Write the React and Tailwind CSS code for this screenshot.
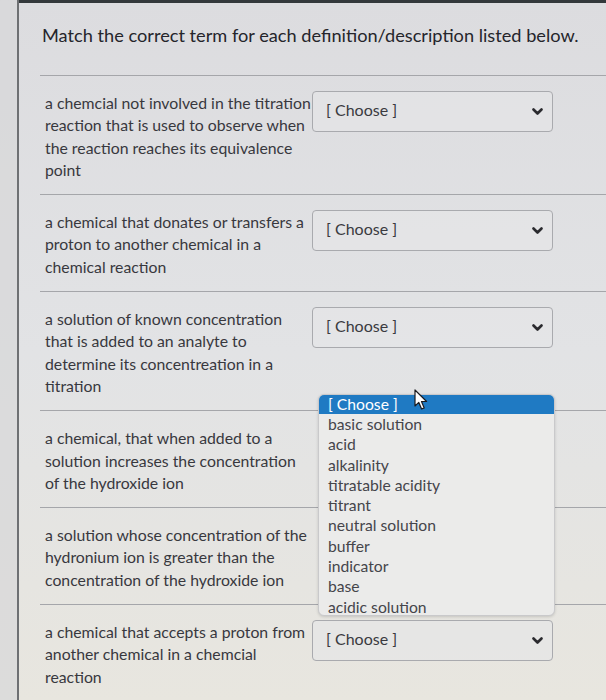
import React from "react";

const rows = [
  ["a chemcial not involved in the titration", "reaction that is used to observe when", "the reaction reaches its equivalence", "point"],
  ["a chemical that donates or transfers a", "proton to another chemical in a", "chemical reaction"],
  ["a solution of known concentration", "that is added to an analyte to", "determine its concentreation in a", "titration"],
  ["a chemical, that when added to a", "solution increases the concentration", "of the hydroxide ion"],
  ["a solution whose concentration of the", "hydronium ion is greater than the", "concentration of the hydroxide ion"],
  ["a chemical that accepts a proton from", "another chemical in a chemcial", "reaction"],
];

const options = [
  "basic solution",
  "acid",
  "alkalinity",
  "titratable acidity",
  "titrant",
  "neutral solution",
  "buffer",
  "indicator",
  "base",
  "acidic solution",
];

function Chevron() {
  return (
    <svg width="11" height="8" viewBox="0 0 11 8" className="shrink-0">
      <path d="M1.5 1.5 L5.5 5.5 L9.5 1.5" fill="none" stroke="#2a2a2e" strokeWidth="2.6" strokeLinecap="round" strokeLinejoin="round" />
    </svg>
  );
}

function Select({ hidden }) {
  return (
    <div className={"w-[241px] h-[41px] shrink-0 rounded-[4px] border border-[#a9aaae] bg-[#e6e6e8]/60 flex items-center justify-between pl-[13px] pr-[9px] " + (hidden ? "invisible" : "visible")}>
      <span className="text-[16px] text-[#3a3a40] -mt-[3px]">[ Choose ]</span>
      <Chevron />
    </div>
  );
}

export default function App() {
  return (
    <div className="relative w-[606px] h-[700px] overflow-hidden bg-gradient-to-b from-[#dcdcdf] via-[#e2e3e5] to-[#e8e6df] font-['Lato',sans-serif]">
      <div className="flex h-full">
        <div className="w-[17px] bg-[#d7d7d9]/70" />
        <div className="w-[2px] bg-[#6e7073]" />
        <div className="flex-1 border-t-[3px] border-[#33383b]">
          <div className="pl-[21px]">
            <div className="h-[72px] pl-[2px] pt-[19px]">
              <h1 className="text-[18.2px] leading-[26px] text-[#25252b] whitespace-nowrap">
                Match the correct term for each definition/description listed below.
              </h1>
            </div>
            {rows.map((lines, i) => (
              <div key={i} className="border-t border-[#a5a6aa] pt-[16px] pb-[13px] pl-[5px] flex">
                <div className="w-[267px] shrink-0 text-[15.8px] leading-[22.3px] text-[#38383e]">
                  {lines.map((l, j) => (
                    <div key={j} className="whitespace-nowrap">{l}</div>
                  ))}
                </div>
                <div className="-mt-[1px]">
                  <Select hidden={i === 3 || i === 4} />
                </div>
              </div>
            ))}
          </div>
        </div>
      </div>

      <div className="absolute left-[318px] top-[394px] w-[237px] h-[222px] rounded-[6px] border border-[#c9c9cb] bg-[#ebebea] shadow-[0_1px_3px_rgba(0,0,0,0.15)] overflow-hidden">
        <div className="h-[19px] bg-[#1f7ac3] text-white text-[15.7px] leading-[19px] pl-[9px]">[ Choose ]</div>
        {options.map((o) => (
          <div key={o} className="h-[20.3px] text-[15.7px] leading-[20.3px] pl-[9px] text-[#45454b]">{o}</div>
        ))}
      </div>

      <svg className="absolute left-[414px] top-[389px]" width="14" height="22" viewBox="0 0 14 22">
        <path d="M1 1 L1 17 L4.8 13.4 L7.6 20 L10.2 18.9 L7.5 12.5 L12.6 12.5 Z" fill="#ffffff" stroke="#1b1b1f" strokeWidth="1.2" strokeLinejoin="round" />
      </svg>
    </div>
  );
}
